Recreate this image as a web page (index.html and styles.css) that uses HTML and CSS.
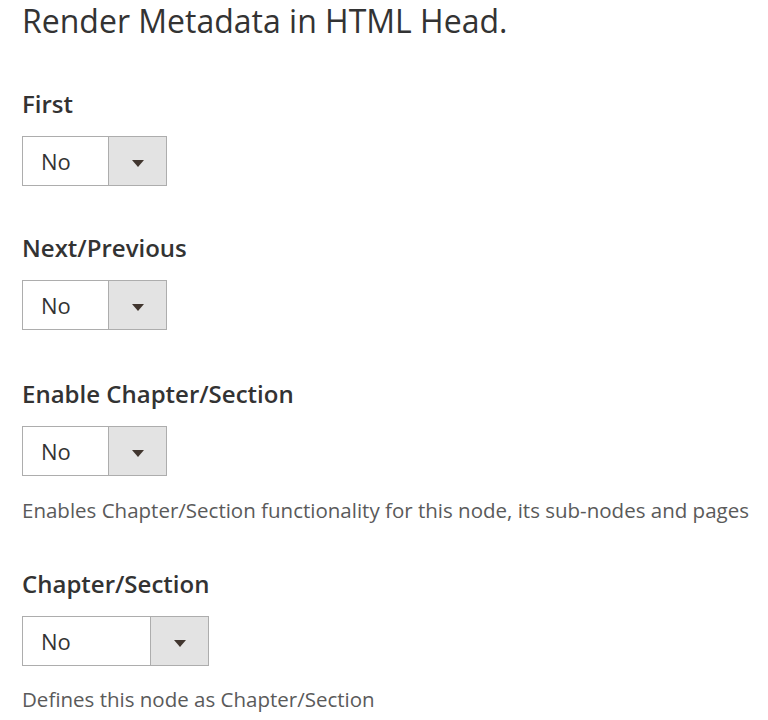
FILE: index.html
```html
<!DOCTYPE html>
<html>
<head>
<meta charset="utf-8">
<link rel="stylesheet" href="styles.css">
</head>
<body>
<div class="page">
  <h1 class="title">Render Metadata in HTML Head.</h1>

  <div class="field f1">
    <div class="label">First</div>
    <div class="select">
      <span class="value">No</span>
      <span class="btn"><span class="arrow"></span></span>
    </div>
  </div>

  <div class="field f2">
    <div class="label">Next/Previous</div>
    <div class="select">
      <span class="value">No</span>
      <span class="btn"><span class="arrow"></span></span>
    </div>
  </div>

  <div class="field f3">
    <div class="label">Enable Chapter/Section</div>
    <div class="select">
      <span class="value">No</span>
      <span class="btn"><span class="arrow"></span></span>
    </div>
    <div class="note">Enables Chapter/Section functionality for this node, its sub-nodes and pages</div>
  </div>

  <div class="field f4">
    <div class="label">Chapter/Section</div>
    <div class="select wide">
      <span class="value">No</span>
      <span class="btn"><span class="arrow"></span></span>
    </div>
    <div class="note">Defines this node as Chapter/Section</div>
  </div>
</div>
</body>
</html>
```
FILE: styles.css
```css
html, body {
  margin: 0;
  padding: 0;
  background: #ffffff;
}
.page {
  padding-left: 22px;
  padding-top: 1px;
  font-family: "Open Sans", "Noto Sans", sans-serif;
  color: #303030;
}
.title {
  margin: -2px 0 0 0;
  font-size: 32px;
  line-height: 44px;
  font-weight: 400;
  color: #333333;
}
.field {
  display: flex;
  flex-direction: column;
  align-items: flex-start;
}
.f1 { margin-top: 45px; }
.f2 { margin-top: 46px; }
.f3 { margin-top: 48px; }
.f4 { margin-top: 44px; }
.label {
  font-size: 24px;
  line-height: 32px;
  font-weight: 600;
  color: #333333;
  margin-bottom: 16px;
}
.select {
  display: flex;
  width: 145px;
  height: 50px;
  box-sizing: border-box;
  border: 1px solid #adadad;
  background: #fff;
}
.select.wide { width: 187px; }
.value {
  flex: 1;
  padding-left: 18px;
  font-size: 22px;
  line-height: 48px;
  color: #333333;
}
.btn {
  width: 57px;
  border-left: 1px solid #adadad;
  background: #e3e3e3;
  display: flex;
  align-items: center;
  justify-content: center;
}
.arrow {
  width: 0;
  height: 0;
  border-left: 6px solid transparent;
  border-right: 6px solid transparent;
  border-top: 7px solid #41362f;
  margin-top: 5px;
}
.note {
  margin-top: 19.5px;
  font-size: 20.5px;
  line-height: 28px;
  color: #5a5a5a;
}
```
